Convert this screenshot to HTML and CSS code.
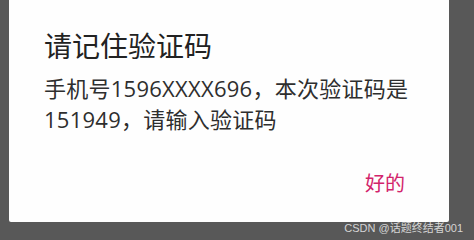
FILE: index.html
```html
<!DOCTYPE html>
<html lang="zh">
<head>
<meta charset="utf-8">
<link rel="stylesheet" href="styles.css">
</head>
<body>
<div class="screen">
  <div class="dialog">
    <div class="title">请记住验证码</div>
    <div class="message">手机号1596XXXX696，本次验证码是<br>151949，请输入验证码</div>
    <div class="actions"><span class="btn">好的</span></div>
  </div>
  <div class="watermark">CSDN @话题终结者001</div>
</div>
</body>
</html>
```
FILE: styles.css
```css
html, body {
  margin: 0;
  padding: 0;
}
body {
  background: #585858;
  font-family: "Noto Sans CJK SC", "Noto Sans", sans-serif;
}
.screen {
  position: relative;
  width: 474px;
  height: 237px;
  overflow: hidden;
}
.dialog {
  margin-left: 9px;
  width: 440px;
  height: 222px;
  background: #fefefe;
  border-radius: 0 0 2px 2px;
  box-sizing: border-box;
  padding: 28px 0 0 35px;
  display: flex;
  flex-direction: column;
}
.title {
  font-size: 28px;
  line-height: 34px;
  color: #222;
}
.message {
  margin-top: 11px;
  font-family: "Open Sans", "Noto Sans CJK SC", sans-serif;
  font-size: 22px;
  line-height: 31px;
  letter-spacing: 0.25px;
  color: #2e2e2e;
}
.actions {
  display: flex;
  justify-content: flex-end;
  padding-right: 44px;
  margin-top: 36px;
}
.btn {
  font-size: 20px;
  line-height: 24px;
  color: #d2246b;
}
.watermark {
  position: absolute;
  right: 11px;
  bottom: 2px;
  font-family: "Liberation Sans", "Noto Sans CJK SC", sans-serif;
  font-size: 11px;
  line-height: 13px;
  color: rgba(255,255,255,0.75);
}
```
